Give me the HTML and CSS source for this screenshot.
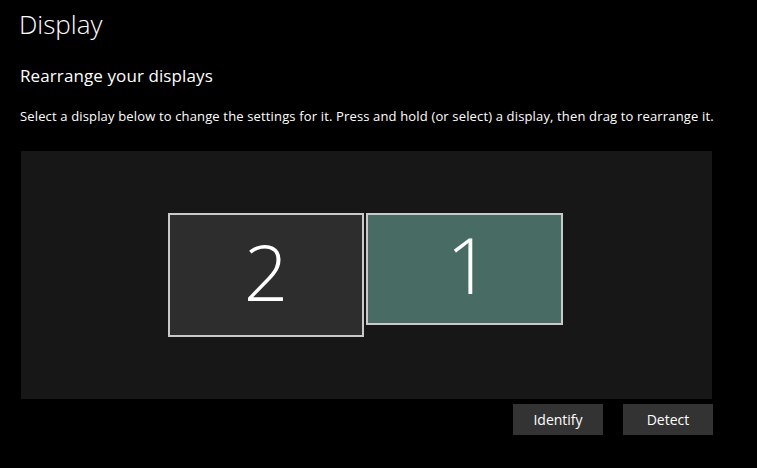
FILE: index.html
```html
<!DOCTYPE html>
<html lang="en">
<head>
<meta charset="utf-8">
<title>Display</title>
<link rel="stylesheet" href="styles.css">
</head>
<body>
<main class="page">
  <h1 class="title">Display</h1>
  <h2 class="subtitle">Rearrange your displays</h2>
  <p class="desc">Select a display below to change the settings for it. Press and hold (or select) a display, then drag to rearrange it.</p>
  <div class="canvas">
    <div class="monitor monitor-2"><span class="num">2</span></div>
    <div class="monitor monitor-1"><span class="num">1</span></div>
  </div>
  <div class="actions">
    <button class="btn" type="button">Identify</button>
    <button class="btn" type="button">Detect</button>
  </div>
</main>
</body>
</html>
```
FILE: styles.css
```css
html, body {
  margin: 0;
  padding: 0;
  background: #000;
  color: #fff;
  font-family: "Open Sans", "Noto Sans", sans-serif;
}

.page {
  width: 757px;
  height: 468px;
  overflow: hidden;
  padding-left: 19px;
  box-sizing: border-box;
}

.title {
  margin: 11px 0 0 0;
  font-size: 26px;
  line-height: 26px;
  font-weight: 300;
}

.subtitle {
  margin: 30px 0 0 1px;
  font-size: 17px;
  line-height: 17px;
  font-weight: 400;
  letter-spacing: 0.1px;
}

.desc {
  margin: 26px 0 0 1px;
  font-size: 13px;
  line-height: 13px;
  font-weight: 400;
  letter-spacing: 0.15px;
  white-space: nowrap;
}

.canvas {
  position: relative;
  margin: 28px 0 0 2px;
  width: 691px;
  height: 248px;
  background: #171717;
}

.monitor {
  position: absolute;
  top: 62px;
  box-sizing: border-box;
  border: 2px solid #c9c9c9;
  display: flex;
  align-items: center;
  justify-content: center;
}

.monitor-2 {
  left: 147px;
  width: 196px;
  height: 124px;
  background: #2d2d2d;
  padding-bottom: 9px;
}

.monitor-1 {
  left: 345px;
  width: 197px;
  height: 112px;
  background: #486b63;
  padding-bottom: 11px;
  padding-left: 8px;
}

.num {
  font-size: 78px;
  line-height: 1;
  font-weight: 300;
}

.actions {
  display: flex;
  gap: 20px;
  margin: 5px 0 0 494px;
}

.btn {
  width: 90px;
  height: 31px;
  border: none;
  background: #333;
  color: #fff;
  font-family: "Open Sans", "Noto Sans", sans-serif;
  font-size: 14px;
  padding: 0;
}
```
